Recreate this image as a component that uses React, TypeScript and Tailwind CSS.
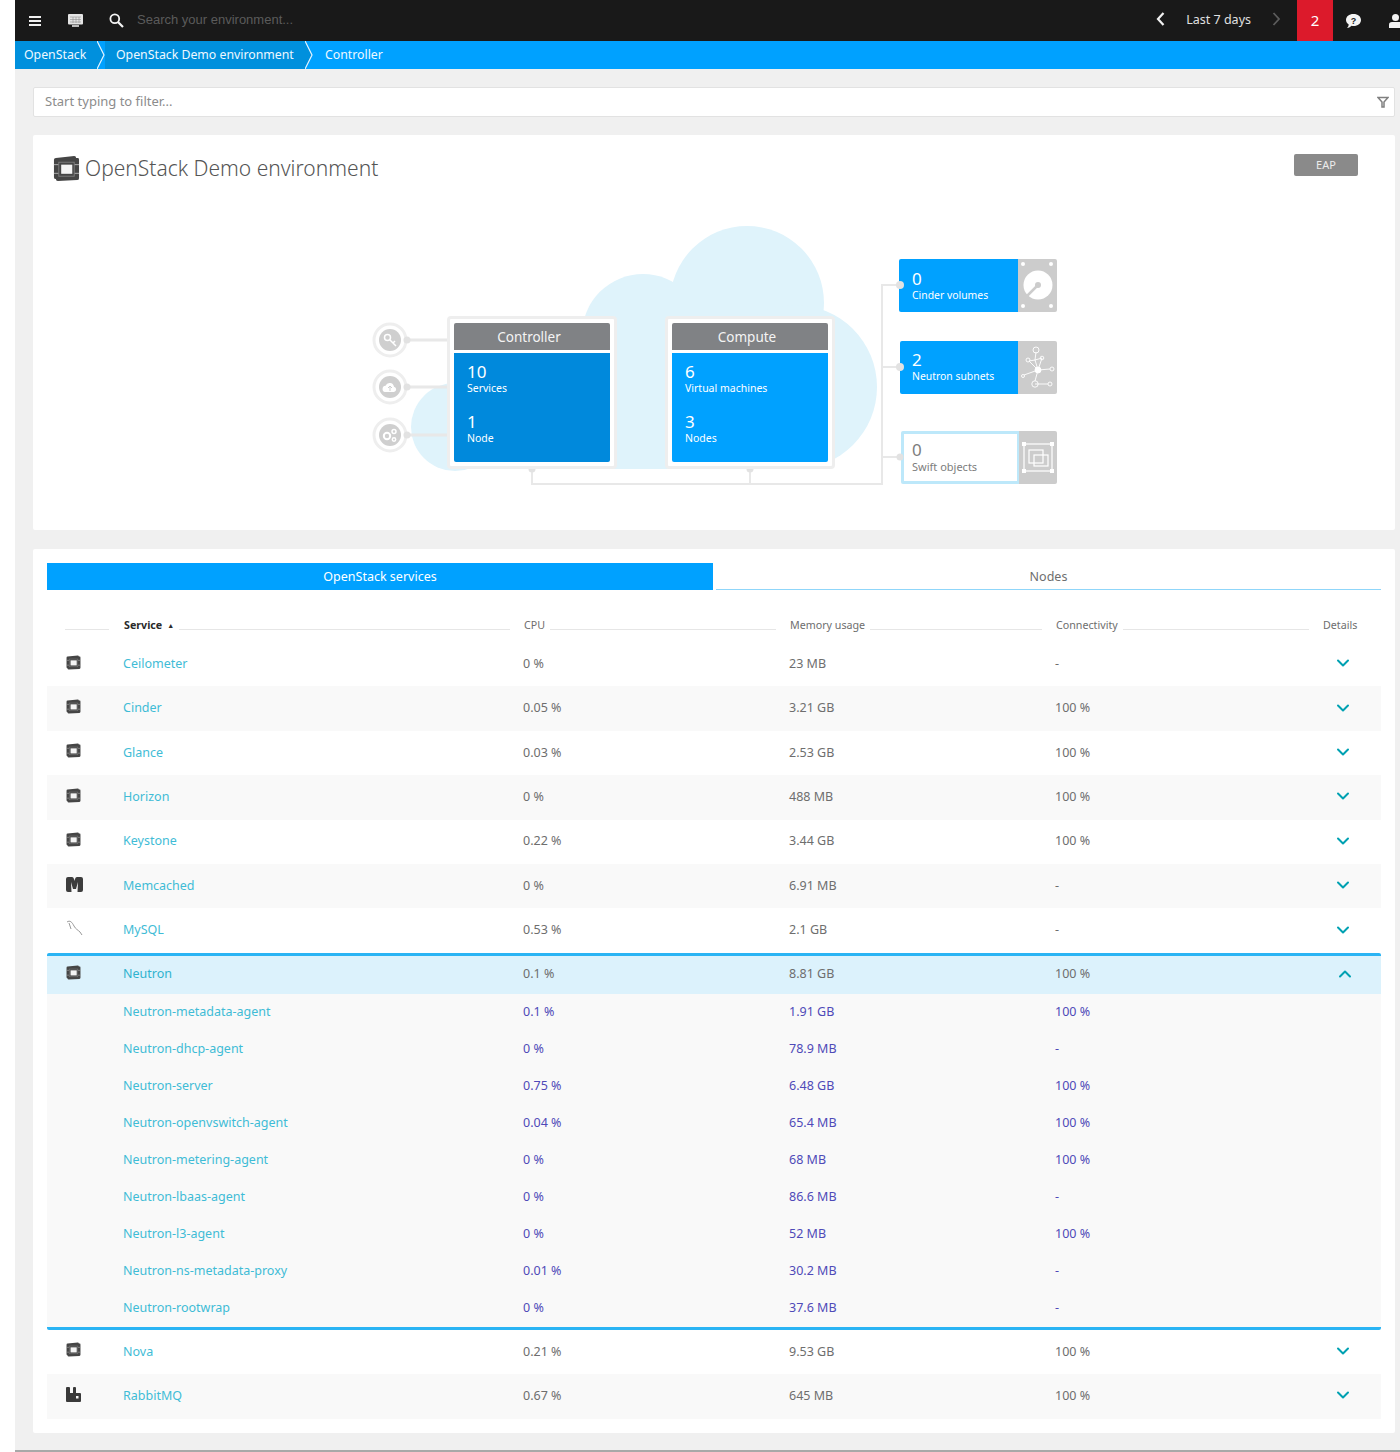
import { ChevronDown, ChevronUp } from "lucide-react";

type Service = { name: string; cpu: string; mem: string; conn: string };

const FONT = "font-['Noto_Sans','Open_Sans',sans-serif]";

const topServices: (Service & { icon: string })[] = [
  { name: "Ceilometer", cpu: "0 %", mem: "23 MB", conn: "-", icon: "os" },
  { name: "Cinder", cpu: "0.05 %", mem: "3.21 GB", conn: "100 %", icon: "os" },
  { name: "Glance", cpu: "0.03 %", mem: "2.53 GB", conn: "100 %", icon: "os" },
  { name: "Horizon", cpu: "0 %", mem: "488 MB", conn: "100 %", icon: "os" },
  { name: "Keystone", cpu: "0.22 %", mem: "3.44 GB", conn: "100 %", icon: "os" },
  { name: "Memcached", cpu: "0 %", mem: "6.91 MB", conn: "-", icon: "mem" },
  { name: "MySQL", cpu: "0.53 %", mem: "2.1 GB", conn: "-", icon: "mysql" },
];

const neutronProcs: Service[] = [
  { name: "Neutron-metadata-agent", cpu: "0.1 %", mem: "1.91 GB", conn: "100 %" },
  { name: "Neutron-dhcp-agent", cpu: "0 %", mem: "78.9 MB", conn: "-" },
  { name: "Neutron-server", cpu: "0.75 %", mem: "6.48 GB", conn: "100 %" },
  { name: "Neutron-openvswitch-agent", cpu: "0.04 %", mem: "65.4 MB", conn: "100 %" },
  { name: "Neutron-metering-agent", cpu: "0 %", mem: "68 MB", conn: "100 %" },
  { name: "Neutron-lbaas-agent", cpu: "0 %", mem: "86.6 MB", conn: "-" },
  { name: "Neutron-l3-agent", cpu: "0 %", mem: "52 MB", conn: "100 %" },
  { name: "Neutron-ns-metadata-proxy", cpu: "0.01 %", mem: "30.2 MB", conn: "-" },
  { name: "Neutron-rootwrap", cpu: "0 %", mem: "37.6 MB", conn: "-" },
];

const ROW_GRID = "grid grid-cols-[76px_400px_266px_266px_1fr_62px] items-center";

function OpenStackIcon({ size }: { size: number }) {
  return (
    <svg width={size} height={size} viewBox="0 0 28 28">
      <path d="M3 3 L22 1 Q24 1 24 3 L26 3 Q27 3 27 5 L27 24 Q27 26 25 26 L5 27 Q3 27 3 25 Q1 25 1 23 L1 5 Q1 3 3 3 Z" fill="#454545" />
      <path d="M1 10 H6 M1 19 H6 M22 10 H27 M22 19 H27" stroke="#b0b0b0" strokeWidth="1" />
      <rect x="6" y="7.5" width="16" height="14.5" fill="none" stroke="#7a7a7a" strokeWidth="1" />
      <rect x="8.5" y="10" width="11.5" height="9.5" fill="#f4f4f4" />
    </svg>
  );
}

function MemcachedIcon() {
  return (
    <svg width="17" height="15" viewBox="0 0 17 15">
      <path d="M2 0 H6 Q7.5 0 8 2 L8.5 4 L9 2 Q9.5 0 11 0 H15 Q17 0 17 2 V13 Q17 15 15 15 H11.5 L12 5 L10 12 H7 L5 5 L5.5 15 H2 Q0 15 0 13 V2 Q0 0 2 0 Z" fill="#3d3d3d" />
    </svg>
  );
}

function MysqlIcon() {
  return (
    <svg width="18" height="17" viewBox="0 0 18 17" fill="none" stroke="#8d8d8d" strokeWidth="0.9">
      <path d="M1 2 C4 0 6 2 8 6 C9.5 9 12 10 14 12 M3 3 L5 9 M14 12 L16 15" />
    </svg>
  );
}

function RabbitIcon() {
  return (
    <svg width="15" height="15" viewBox="0 0 15 15">
      <path d="M0 1 Q0 0 1 0 H3 Q4 0 4 1 V6 H7 V1 Q7 0 8 0 H9 Q10 0 10 1 V6 H14 Q15 6 15 7 V14 Q15 15 14 15 H1 Q0 15 0 14 Z" fill="#3a3a3a" />
      <rect x="10" y="9" width="2.5" height="2.5" fill="#f9f9f9" />
    </svg>
  );
}

function RowIcon({ icon }: { icon: string }) {
  if (icon === "mem") return <MemcachedIcon />;
  if (icon === "mysql") return <MysqlIcon />;
  if (icon === "rabbit") return <RabbitIcon />;
  return <OpenStackIcon size={15} />;
}

function ServiceRow({ svc, icon, stripe }: { svc: Service; icon: string; stripe: boolean }) {
  return (
    <div className={`${ROW_GRID} h-[44.4px] text-[12.5px] text-[#6e6e6e] ${stripe ? "bg-[#f9f9f9]" : "bg-white"}`}>
      <div className="flex pl-[19px] -mt-[4px]">
        <RowIcon icon={icon} />
      </div>
      <div className="text-[#3fbcd6]">{svc.name}</div>
      <div>{svc.cpu}</div>
      <div>{svc.mem}</div>
      <div>{svc.conn}</div>
      <div className="pl-[14px] -mt-[2px]">
        <ChevronDown size={20} strokeWidth={2.4} className="text-[#00a1b2]" />
      </div>
    </div>
  );
}

function HeaderCell({ label, strong, className }: { label: string; strong?: boolean; className?: string }) {
  return (
    <div className={`flex items-end gap-[5px] ${className ?? ""}`}>
      <span className={`h-4 text-[10.7px] leading-4 whitespace-nowrap ${strong ? "font-bold text-[#2a2a2a]" : "text-[#6e6e6e]"}`}>
        {label}
      </span>
      {strong && <span className="text-[7px] leading-[14px] text-[#2a2a2a]">▲</span>}
      <span className="flex-1 border-b border-[#e6e6e6] mb-[3px]" />
    </div>
  );
}

function Diagram() {
  return (
    <div className={`relative w-[700px] h-[265px] ml-[337px] ${FONT}`}>
      <svg className="absolute left-0 top-0" width="700" height="265" viewBox="370 225 700 265">
        <g fill="#dff3fb">
          <circle cx="747" cy="303" r="77" />
          <circle cx="643" cy="335" r="61" />
          <circle cx="795" cy="387" r="82" />
          <circle cx="455" cy="427" r="44" />
          <rect x="455" y="385" width="345" height="84" />
          <rect x="583" y="335" width="200" height="60" />
        </g>
        <g fill="none" stroke="#e8e8e8" strokeWidth="2">
          <path d="M407 340 H447 M407 387 H447 M407 435 H447" strokeWidth="3" />
          <path d="M532 469 V484 H882 V285 H900 M750 469 V484 M882 367 H900 M882 457 H900" />
        </g>
        <g fill="#fff" stroke="#eeeeee" strokeWidth="3">
          <circle cx="390" cy="340" r="16" />
          <circle cx="390" cy="387" r="16" />
          <circle cx="390" cy="435" r="16" />
        </g>
        <g fill="#cfcfcf">
          <circle cx="390" cy="340" r="11" />
          <circle cx="390" cy="387" r="11" />
          <circle cx="390" cy="435" r="11" />
        </g>
        <g fill="#e2e2e2">
          <circle cx="407" cy="340" r="3.5" />
          <circle cx="407" cy="387" r="3.5" />
          <circle cx="407" cy="435" r="3.5" />
          <circle cx="532" cy="469" r="3.5" />
          <circle cx="750" cy="469" r="3.5" />
        </g>
        <g fill="none" stroke="#fff" strokeWidth="1.5">
          <circle cx="387.5" cy="337.5" r="3" />
          <path d="M390 340 L396 346 M393 343 L395 341" />
          <path d="M385 392 a3.2 3.2 0 0 1 0.5 -6.3 a4.5 4.5 0 0 1 8.5 1 a2.7 2.7 0 0 1 0 5.3 Z" fill="#fff" stroke="none" />
          <path d="M390 391 V386.5 M388 388 L390 386 L392 388" stroke="#cfcfcf" strokeWidth="1" />
          <circle cx="387" cy="436" r="3.2" strokeWidth="2" />
          <circle cx="394" cy="431.5" r="2" />
          <circle cx="394" cy="439.5" r="1.7" />
        </g>
      </svg>

      <NodeBox className="left-[77px]" title="Controller" body="bg-[#0089dc]" lines={[["10", "Services"], ["1", "Node"]]} />
      <NodeBox className="left-[295px]" title="Compute" body="bg-[#00a1ff]" lines={[["6", "Virtual machines"], ["3", "Nodes"]]} />

      <div className="absolute left-[529px] top-[34px] w-[158px] h-[53px] flex rounded-[2px] overflow-hidden">
        <StatText count="0" label="Cinder volumes" className="bg-[#00a1ff] text-white pl-[13px] pb-[1px]" />
        <div className="w-[39px] bg-[#cccccc] flex items-center justify-center">
          <svg width="39" height="53" viewBox="0 0 39 53">
            <g fill="#fff">
              <circle cx="5" cy="5" r="2" />
              <circle cx="33" cy="5" r="2" />
              <circle cx="5" cy="47" r="2" />
              <circle cx="33" cy="47" r="2" />
              <circle cx="20" cy="26" r="14.5" />
            </g>
            <circle cx="20" cy="26" r="3" fill="#cccccc" />
            <path d="M19 27 L9 37" stroke="#cccccc" strokeWidth="2.5" />
          </svg>
        </div>
      </div>

      <div className="absolute left-[530px] top-[116px] w-[157px] h-[53px] flex rounded-[2px] overflow-hidden">
        <StatText count="2" label="Neutron subnets" className="bg-[#00a1ff] text-white pl-[12px] pb-[3px]" />
        <div className="w-[39px] bg-[#cccccc]">
          <svg width="39" height="53" viewBox="0 0 39 53" fill="none" stroke="#fff" strokeWidth="0.9">
            <path d="M20 29 L17 19 L18 11 M20 29 L11 20 L17 19 L24 17 L20 29 M20 29 L6 34 M20 29 L32 28 M20 29 L17 40 M17 43 H30" />
            <circle cx="18" cy="9" r="3" />
            <circle cx="10" cy="19" r="2" />
            <circle cx="24" cy="17" r="1.8" />
            <circle cx="34" cy="28" r="2" />
            <circle cx="5" cy="35" r="1.5" />
            <circle cx="17" cy="43" r="3.2" />
            <circle cx="32" cy="43" r="2" />
            <circle cx="20" cy="29" r="3" fill="#fff" />
          </svg>
        </div>
      </div>

      <div className="absolute left-[531px] top-[206px] w-[156px] h-[53px] flex rounded-[2px] overflow-hidden">
        <StatText count="0" label="Swift objects" labelSize="text-[11px] mt-px" className="bg-white text-[#7d7d7d] pl-[8px] pb-[2px] border-[3px] border-r-[2px] border-[#bde8fa]" />
        <div className="w-[38px] bg-[#cccccc]">
          <svg width="38" height="53" viewBox="0 0 38 53" fill="none" stroke="#fff" strokeWidth="1.2">
            <rect x="5" y="13" width="28" height="27" />
            <rect x="10" y="19" width="14" height="13" />
            <rect x="15" y="24" width="14" height="11" />
            <g fill="#fff" stroke="none">
              <rect x="3" y="11" width="4" height="4" />
              <rect x="31" y="11" width="4" height="4" />
              <rect x="3" y="38" width="4" height="4" />
              <rect x="31" y="38" width="4" height="4" />
            </g>
          </svg>
        </div>
      </div>

      <svg className="absolute left-[525px] top-[56px]" width="10" height="10" viewBox="0 0 10 10">
        <circle cx="5" cy="4" r="4" fill="#e2e2e2" />
      </svg>
      <svg className="absolute left-[526px] top-[138px]" width="10" height="10" viewBox="0 0 10 10">
        <circle cx="4" cy="4" r="4" fill="#e2e2e2" />
      </svg>
      <svg className="absolute left-[526px] top-[228px]" width="10" height="10" viewBox="0 0 10 10">
        <circle cx="4" cy="4" r="3.5" fill="#e2e2e2" />
      </svg>
    </div>
  );
}

function StatText({ count, label, className, labelSize }: { count: string; label: string; className: string; labelSize?: string }) {
  return (
    <div className={`flex-1 flex flex-col justify-center ${className}`}>
      <div className="text-[17px] leading-[18px] pt-[2px]">{count}</div>
      <div className={`${labelSize ?? "text-[10.4px]"} leading-[14px]`}>{label}</div>
    </div>
  );
}

function NodeBox({ className, title, body, lines }: { className: string; title: string; body: string; lines: string[][] }) {
  return (
    <div className={`absolute top-[91px] w-[170px] h-[153px] bg-white border-[3px] border-[#eeeeee] rounded-[4px] p-[4px] flex flex-col ${className}`}>
      <div className="h-[27px] shrink-0 bg-[#808285] rounded-t-[2px] text-[#f4f4f4] text-[13.5px] pr-[6px] pt-px flex items-center justify-center">
        {title}
      </div>
      <div className={`flex-1 mt-[3px] rounded-b-[2px] pl-[13px] pt-[10px] text-white ${body}`}>
        {lines.map(([n, label], i) => (
          <div key={label} className={i > 0 ? "mt-[19px]" : ""}>
            <div className="text-[17px] leading-[18px]">{n}</div>
            <div className="text-[10.5px] leading-[12px] mt-px">{label}</div>
          </div>
        ))}
      </div>
    </div>
  );
}

function TopBar() {
  return (
    <div className="h-[41px] bg-[#191919] flex items-center relative">
      <svg className="ml-[14px]" width="12" height="10" viewBox="0 0 12 10" fill="#f0f0f0">
        <rect y="0" width="12" height="2" />
        <rect y="4" width="12" height="2" />
        <rect y="8" width="12" height="2" />
      </svg>
      <svg className="ml-[27px]" width="15" height="13" viewBox="0 0 15 13">
        <rect x="0" y="0" width="15" height="10.5" rx="1" fill="#e4e4e4" />
        <path d="M2 3 H13 M2 5.5 H13 M2 8 H13 M5 3 V9 M8 3 V9 M11 3 V9" stroke="#8f8f8f" strokeWidth="0.6" />
        <rect x="4" y="11" width="7" height="2" fill="#bdbdbd" />
      </svg>
      <svg className="ml-[26px]" width="15" height="15" viewBox="0 0 15 15" fill="none" stroke="#f4f4f4">
        <circle cx="5.8" cy="5.8" r="4.4" strokeWidth="1.8" />
        <path d="M9 9 L14 14" strokeWidth="2.2" />
      </svg>
      <span className="ml-[13px] text-[#5b5b5b] text-[13px] -mt-px font-['Liberation_Sans',sans-serif]">Search your environment...</span>
      <div className="ml-auto -mr-[3px] flex items-center h-full">
        <svg className="-mt-[3px]" width="9" height="14" viewBox="0 0 9 14" fill="none" stroke="#f0f0f0" strokeWidth="2.2">
          <path d="M7.5 1 L2 7 L7.5 13" />
        </svg>
        <span className="ml-[21px] text-[12.5px] text-[#e0e0e0]">Last 7 days</span>
        <svg className="ml-[21px] -mt-[3px]" width="9" height="14" viewBox="0 0 9 14" fill="none" stroke="#5c5c5c" strokeWidth="1.8">
          <path d="M1.5 1 L7 7 L1.5 13" />
        </svg>
        <div className="ml-[16px] w-[36px] h-full bg-[#dc1a2b] text-white text-[15px] flex items-center justify-center">2</div>
        <svg className="ml-[13px]" width="15" height="14" viewBox="0 0 15 14">
          <path d="M7.5 0 C12 0 15 2.6 15 6 C15 9.4 12 12 7.5 12 C6.8 12 6.2 12 5.5 11.8 C4.5 13 3 13.8 1 14 C2 13 2.6 12 2.7 10.5 C1 9.4 0 7.8 0 6 C0 2.6 3 0 7.5 0 Z" fill="#f4f4f4" />
          <text x="7.5" y="9.5" textAnchor="middle" fontSize="9" fontWeight="700" fill="#191919" fontFamily="Liberation Sans">?</text>
        </svg>
        <svg className="ml-[27px]" width="15" height="14" viewBox="0 0 15 14" fill="#f4f4f4">
          <circle cx="7.5" cy="3.5" r="3.5" />
          <path d="M1 14 V10.5 Q1 8 4 8 H11 Q14 8 14 10.5 V14 Z" />
        </svg>
      </div>
    </div>
  );
}

function Crumbs() {
  return (
    <div className="h-[28px] bg-[#00a1ff] flex items-center text-[12.3px] text-[#eef8ff]">
      <div className="h-full w-[82px] bg-[#0090dd] pl-[9px] flex items-center">OpenStack</div>
      <svg width="8" height="28" viewBox="0 0 8 28">
        <path d="M0 0 L7 14 L0 28 Z" fill="#0090dd" />
        <path d="M0 0 L7 14 L0 28" fill="none" stroke="#e4f4ff" strokeWidth="1.2" />
      </svg>
      <div className="h-full w-[200px] bg-[#0090dd] pl-[11px] flex items-center">OpenStack Demo environment</div>
      <svg width="8" height="28" viewBox="0 0 8 28">
        <path d="M0 0 L7 14 L0 28 Z" fill="#0090dd" />
        <path d="M0 0 L7 14 L0 28" fill="none" stroke="#e4f4ff" strokeWidth="1.2" />
      </svg>
      <div className="pl-[12px]">Controller</div>
    </div>
  );
}

export default function App() {
  return (
    <div className={`w-[1400px] h-[1452px] overflow-hidden bg-white ${FONT}`}>
      <div className="ml-[15px] h-[1450px] bg-[#f0f0f0] border-b-2 border-[#a8a8a8] box-content -mb-[2px]">
        <TopBar />
        <Crumbs />

        <div className="ml-[18px] w-[1362px] pt-[18px]">
          <div className="h-[30px] bg-white border border-[#e2e2e2] rounded-[2px] flex items-center justify-between pl-[11px] pr-[5px] text-[13px] text-[#8c8c8c]">
            <span>Start typing to filter...</span>
            <svg width="12" height="12" viewBox="0 0 12 12" fill="none" stroke="#808080" strokeWidth="1.5">
              <path d="M1 1.5 H11 L7 6 V11 H5 V6 Z" />
            </svg>
          </div>

          <div className="mt-[18px] h-[395px] bg-white rounded-[2px]">
            <div className="h-[90px] pt-[19px] pl-[20px] pr-[37px] flex justify-between items-start">
              <div className="flex items-center gap-[5px]">
                <OpenStackIcon size={27} />
                <span className="text-[21px] font-light text-[#555555] leading-7">OpenStack Demo environment</span>
              </div>
              <div className="w-[64px] h-[22px] bg-[#8a8a8a] rounded-[2px] text-[#ececec] text-[11px] flex items-center justify-center">EAP</div>
            </div>
            <Diagram />
          </div>

          <div className="mt-[19px] h-[884px] bg-white rounded-[2px] px-[14px] pt-[14px]">
            <div className="flex h-[27px] text-[12.5px]">
              <div className="w-[666px] bg-[#00a1ff] text-white pt-[2px] flex items-center justify-center">OpenStack services</div>
              <div className="ml-[3px] flex-1 border-b border-[#8fd6fa] text-[#6e6e6e] pt-[2px] flex items-center justify-center">Nodes</div>
            </div>

            <div className={`${ROW_GRID} h-[24px] mt-[23px] mb-[5px]`}>
              <HeaderCell label="" className="pl-[13px] pr-[14px]" />
              <HeaderCell label="Service" strong className="pl-px pr-[13px]" />
              <HeaderCell label="CPU" className="pl-px pr-[13px]" />
              <HeaderCell label="Memory usage" className="pl-px pr-[13px]" />
              <HeaderCell label="Connectivity" className="pl-px pr-[10px]" />
              <HeaderCell label="Details" className="pl-[4px] pr-[20px]" />
            </div>

            {topServices.map((s, i) => (
              <ServiceRow key={s.name} svc={s} icon={s.icon} stripe={i % 2 === 1} />
            ))}

            <div className={`${ROW_GRID} h-[41px] bg-[#dcf2fc] border-t-[3px] border-[#2ab4f4] rounded-t-[2px] text-[12.5px] text-[#6e6e6e]`}>
              <div className="flex pl-[19px] -mt-[4px]">
                <OpenStackIcon size={15} />
              </div>
              <div className="text-[#2fb2cf]">Neutron</div>
              <div>0.1 %</div>
              <div>8.81 GB</div>
              <div>100 %</div>
              <div className="pl-[16px] -mt-[2px]">
                <ChevronUp size={20} strokeWidth={2.4} className="text-[#00a1b2]" />
              </div>
            </div>

            <div className="bg-[#f9f9f9]">
              {neutronProcs.map((p) => (
                <div key={p.name} className={`${ROW_GRID} h-[37px] text-[12.5px] text-[#4f4ab8]`}>
                  <div />
                  <div className="text-[#3fbcd6]">{p.name}</div>
                  <div>{p.cpu}</div>
                  <div>{p.mem}</div>
                  <div>{p.conn}</div>
                  <div />
                </div>
              ))}
            </div>

            <div className="border-t-[3px] border-[#2ab4f4] rounded-b-[2px]" />

            <ServiceRow svc={{ name: "Nova", cpu: "0.21 %", mem: "9.53 GB", conn: "100 %" }} icon="os" stripe={false} />
            <ServiceRow svc={{ name: "RabbitMQ", cpu: "0.67 %", mem: "645 MB", conn: "100 %" }} icon="rabbit" stripe />
          </div>
        </div>
      </div>
    </div>
  );
}
